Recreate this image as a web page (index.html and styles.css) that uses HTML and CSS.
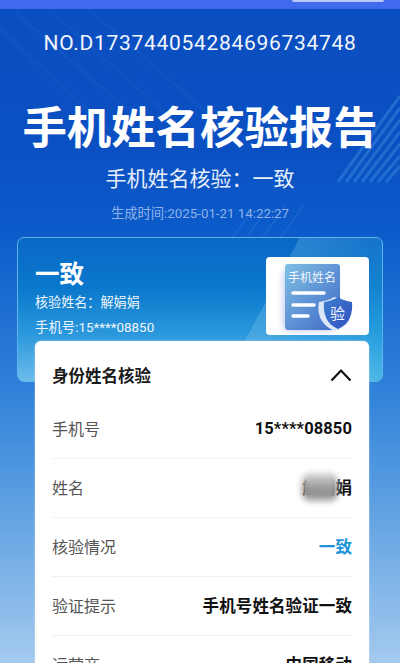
FILE: index.html
```html
<!DOCTYPE html>
<html lang="zh">
<head>
<meta charset="utf-8">
<title>手机姓名核验报告</title>
<link rel="stylesheet" href="styles.css">
</head>
<body>
<div class="page">
  <svg class="stripes" viewBox="0 0 400 663" width="400" height="663" aria-hidden="true">
    <g stroke="#3f8be6" stroke-width="3" opacity=".08">
      <path d="M-10 20L110 130M15 12L150 130M50 10L190 135M90 10L215 120"/>
    </g>
    <g stroke="#4aa2ea" stroke-width="3" opacity=".34">
      <path d="M338 182L400 96M346 182L400 108M354 182L400 120M362 182L400 132M370 182L400 144M378 182L400 156M386 182L400 166"/>
    </g>
    <g stroke="#3b8ce6" stroke-width="2" opacity=".2">
      <path d="M232 238L250 214M246 238L268 208M262 238L286 205M280 238L304 205"/>
    </g>
  </svg>
  <div class="topbar"><span class="pill"></span></div>
  <header class="hero">
    <p class="no">NO.D173744054284696734748</p>
    <h1 class="title">手机姓名核验报告</h1>
    <p class="sub">手机姓名核验：一致</p>
    <p class="time">生成时间:2025-01-21 14:22:27</p>
  </header>
  <section class="card">
    <div class="card-sheen"></div>
    <div class="card-top">
      <div class="card-info">
        <div class="result">一致</div>
        <div class="line">核验姓名：解娟娟</div>
        <div class="line phone">手机号:15****08850</div>
      </div>
      <div class="badge">
        <svg viewBox="0 0 103 78" width="103" height="78">
          <defs>
            <linearGradient id="doc" x1="0" y1="0" x2="1" y2="1">
              <stop offset="0" stop-color="#7fbfe2"/>
              <stop offset="1" stop-color="#3f68c8"/>
            </linearGradient>
            <linearGradient id="shield" x1="0" y1="0" x2="1" y2="1">
              <stop offset="0" stop-color="#3f7fd0"/>
              <stop offset="1" stop-color="#2f4fc0"/>
            </linearGradient>
            <filter id="soft" x="-30%" y="-30%" width="160%" height="160%"><feGaussianBlur stdDeviation="3"/></filter>
          </defs>
          <rect x="17" y="12" width="52" height="62" rx="6" fill="#aab8f0" filter="url(#soft)" opacity=".7"/>
          <rect x="19" y="7" width="55" height="66" rx="3" fill="url(#doc)"/>
          <g stroke="#fff" stroke-width="3.400" stroke-linecap="round" fill="none">
            <path d="M27 36H58M27 48H48M27 59H42"/>
          </g>
          <path d="M68 40C64 43 58 44 53 45C51 56 54 68 69 74C75 72 80 69 84 64L84 50L78 43Z" fill="#dbe6f8"/>
          <path d="M72 40C68 43 63 44 58 45C57 56 60 67 72 72C84 67 87 56 86 45C81 44 76 43 72 40Z" fill="url(#shield)"/>
          <text x="22" y="24.500" class="doc-text">手机姓名</text>
          <text x="64" y="61.500" class="shield-text">验</text>
        </svg>
      </div>
    </div>
  </section>
  <section class="panel">
    <div class="panel-head">
      <span class="panel-title">身份姓名核验</span>
      <svg class="chev" viewBox="0 0 22 14" width="22" height="14"><path d="M1.500 12.500L11 2.500L20.500 12.500" fill="none" stroke="#111" stroke-width="2.200"/></svg>
    </div>
    <div class="rows">
      <div class="row"><span class="k">手机号</span><span class="v">15****08850</span></div>
      <div class="row"><span class="k">姓名</span><span class="v masked">解娟娟<i class="smudge"></i></span></div>
      <div class="row"><span class="k">核验情况</span><span class="v ok">一致</span></div>
      <div class="row"><span class="k">验证提示</span><span class="v">手机号姓名验证一致</span></div>
      <div class="row"><span class="k">运营商</span><span class="v">中国移动</span></div>
    </div>
  </section>
</div>
</body>
</html>
```
FILE: styles.css
```css
* { box-sizing: border-box; }
html, body { margin: 0; padding: 0; height: 100%; overflow: hidden; }
body { font-family: Roboto, "Noto Sans CJK SC", sans-serif; }
p, h1 { margin: 0; }
.page {
  position: relative;
  width: 400px;
  height: 663px;
  overflow: hidden;
  background: linear-gradient(180deg, #0a4ec0 0, #0b50c2 150px, #0c5ccb 235px, #2f80d8 385px, #4f97df 470px, #a4caee 663px);
}
.stripes { position: absolute; left: 0; top: 0; }
.topbar { position: relative; height: 9px; background: #4169ee; }
.pill {
  position: absolute; left: 292px; top: 0; width: 92px; height: 2px;
  background: #b9c8f7; border-radius: 0 0 6px 6px;
}
.hero { position: relative; text-align: center; color: #fff; }
.no { padding-top: 21px; font-size: 21px; line-height: 26px; letter-spacing: .7px; color: #f2f6fd; white-space: nowrap; }
.title { margin-top: 41px; font-size: 44.400px; line-height: 56px; font-weight: 700; font-family: "Noto Sans CJK SC", sans-serif; }
.sub { margin-top: 10px; font-size: 21px; line-height: 28px; font-family: "Noto Sans CJK SC", sans-serif; color: #e6eefb; }
.time { margin-top: 14px; font-size: 13.300px; line-height: 18px; color: #8fb2e6; font-family: Roboto, "Noto Sans CJK SC", sans-serif; }
.card {
  position: relative;
  margin: 14px 17px 0;
  height: 145px;
  border: 1px solid #5fb4ea;
  border-radius: 7px;
  overflow: hidden;
  background: linear-gradient(180deg, #0868c6 0, #0b78cc 50px, #2a97dc 95px, #6fbdea 145px);
}
.card-sheen {
  position: absolute; inset: 0;
  background: linear-gradient(118deg, transparent 0, transparent 64%, rgba(170,220,245,.22) 64%, rgba(120,200,235,.12) 82%, rgba(0,170,220,.3) 100%);
}
.card-top { position: relative; display: flex; justify-content: space-between; padding: 16px 13px 0 17px; }
.card-info { color: #fff; }
.result { font-size: 24.500px; line-height: 37px; font-weight: 700; font-family: "Noto Sans CJK SC", sans-serif; }
.line { font-size: 13.100px; line-height: 18px; margin-top: 2px; color: #eef6fd; font-family: "Noto Sans CJK SC", sans-serif; }
.line.phone { margin-top: 8px; font-size: 13.400px; font-family: Roboto, "Noto Sans CJK SC", sans-serif; }
.badge {
  width: 103px; height: 78px; background: #fff; border-radius: 4px; margin-top: 3px;
}
.badge svg { display: block; }
.doc-text { font-size: 12px; fill: #eef6fd; font-family: "Noto Sans CJK SC", sans-serif; }
.shield-text { font-size: 15px; fill: #f2f6fd; font-family: "Noto Sans CJK SC", sans-serif; }
.panel {
  position: absolute;
  left: 35px; top: 341px;
  width: 334px;
  height: 340px;
  background: #fff;
  border-radius: 6px 6px 0 0;
  box-shadow: 0 0 2px rgba(255,255,255,.6);
  padding: 0 17px;
  font-family: "Noto Sans CJK SC", sans-serif;
}
.panel-head { display: flex; justify-content: space-between; align-items: center; height: 59px; padding-top: 9px; }
.panel-title { font-size: 16.500px; font-weight: 700; color: #1a1a1a; }
.row {
  display: flex; justify-content: space-between; align-items: center;
  height: 59px; padding-bottom: 2px; border-bottom: 1px solid #f1f2f4; font-size: 16px; color: #111;
}
.k { color: #555; }
.v { font-weight: 700; font-family: Roboto, "Noto Sans CJK SC", sans-serif; font-size: 16.500px; letter-spacing: .1px; }
.ok { color: #1c95d8; }
.masked { position: relative; }
.smudge {
  position: absolute; left: 0; top: -2px; width: 36px; height: 28px;
  background: linear-gradient(180deg, #d8d8d8, #8e8e8e 65%, #a5a5a5);
  border-radius: 8px; filter: blur(3px);
}
```
